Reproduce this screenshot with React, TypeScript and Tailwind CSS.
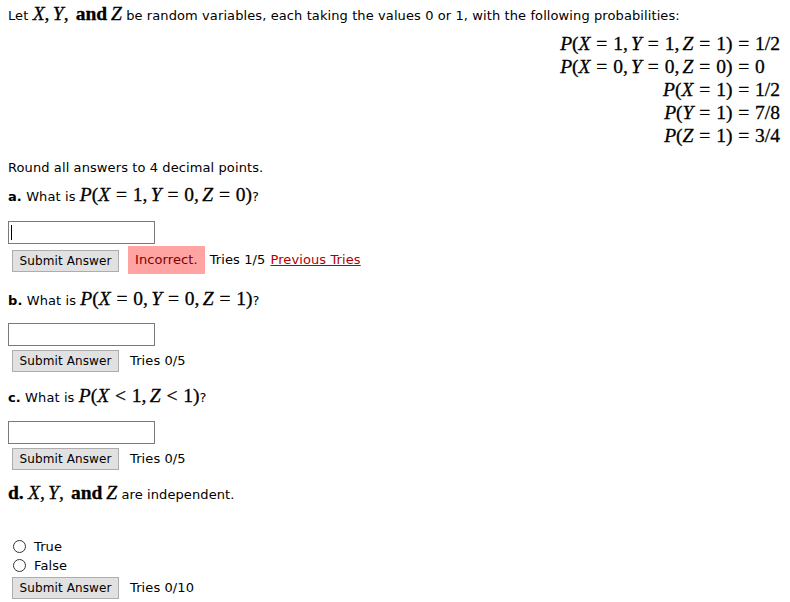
import React from 'react';

const textFont = { fontFamily: '"DejaVu Sans", Verdana, sans-serif' };

const V: React.FC<{ children: React.ReactNode }> = ({ children }) => (
  <span className="italic">{children}</span>
);

const Eq: React.FC<{ children?: React.ReactNode }> = ({ children = '=' }) => (
  <span className="mx-[0.3em]">{children}</span>
);

const Comma: React.FC = () => <span className="mr-[0.17em]">,</span>;

const Math: React.FC<{ children: React.ReactNode; className?: string }> = ({ children, className = 'leading-none' }) => (
  <span
    className={`text-[19.5px] tracking-normal text-black [-webkit-text-stroke:0.3px_black] ${className}`}
    style={{ fontFamily: '"Liberation Serif", "Times New Roman", serif' }}
  >
    {children}
  </span>
);

const Button: React.FC = () => (
  <button
    className="ml-[4px] h-[22px] w-[107px] border border-[#adadad] bg-[#e1e1e1] text-[12px] text-black"
    style={textFont}
  >
    Submit Answer
  </button>
);

const Input: React.FC<{ focused?: boolean }> = ({ focused }) => (
  <div className="h-[23px] w-[147px] border border-[#7a7a7a] bg-white flex items-center pl-[2px]">
    {focused && <span className="h-[15px] w-px bg-black" />}
  </div>
);

const Radio: React.FC<{ label: string }> = ({ label }) => (
  <div className="flex items-center h-[19px] pl-[5px]">
    <span className="h-[13px] w-[13px] rounded-full border border-[#333] bg-white" />
    <span className="ml-[8px]">{label}</span>
  </div>
);

const XYZ: React.FC = () => (
  <Math>
    <V>X</V>
    <Comma />
    <V>Y</V>
    <Comma />
    <span className="font-bold mx-[0.2em]">and</span>
    <V>Z</V>
  </Math>
);

export default function App() {
  return (
    <div className="bg-white min-h-[602px] w-[790px] pl-[8px] text-[13px] tracking-[0.1px] text-black" style={textFont}>
      <div className="pt-[4px] h-[24px] leading-[20px] whitespace-nowrap">
        Let <XYZ /> be random variables, each taking the values 0 or 1, with the following probabilities:
      </div>

      <div className="mt-[8px] flex justify-end pr-[10px]">
        <div className="flex flex-col">
          <Math className="h-[23px] leading-[23px] text-left whitespace-nowrap">
            <V>P</V>(<V>X</V><Eq />1<Comma /><V>Y</V><Eq />1<Comma /><V>Z</V><Eq />1)<Eq />1/2
          </Math>
          <Math className="h-[23px] leading-[23px] text-left whitespace-nowrap">
            <V>P</V>(<V>X</V><Eq />0<Comma /><V>Y</V><Eq />0<Comma /><V>Z</V><Eq />0)<Eq />0
          </Math>
          <Math className="h-[23px] leading-[23px] text-right whitespace-nowrap">
            <V>P</V>(<V>X</V><Eq />1)<Eq />1/2
          </Math>
          <Math className="h-[23px] leading-[23px] text-right whitespace-nowrap">
            <V>P</V>(<V>Y</V><Eq />1)<Eq />7/8
          </Math>
          <Math className="h-[23px] leading-[23px] text-right whitespace-nowrap">
            <V>P</V>(<V>Z</V><Eq />1)<Eq />3/4
          </Math>
        </div>
      </div>

      <div className="mt-[11px] h-[20px] leading-[20px]">Round all answers to 4 decimal points.</div>

      {/* a */}
      <div className="mt-[7px] h-[24px] leading-[24px]">
        <b>a.</b> What is{' '}
        <Math>
          <V>P</V>(<V>X</V><Eq />1<Comma /><V>Y</V><Eq />0<Comma /><V>Z</V><Eq />0)
        </Math>
        ?
      </div>
      <div className="mt-[12px]">
        <Input focused />
      </div>
      <div className="mt-[2px] flex items-center h-[28px]">
        <div className="pt-[2px]">
          <Button />
        </div>
        <span className="ml-[9px] h-[28px] px-[7px] flex items-center bg-[#ffa3a3] text-[#7a0000]">Incorrect.</span>
        <span className="ml-[5px]">Tries 1/5</span>
        <a href="#" className="ml-[5px] text-[#b00000] underline">Previous Tries</a>
      </div>

      {/* b */}
      <div className="mt-[15px] h-[24px] leading-[24px]">
        <b>b.</b> What is{' '}
        <Math>
          <V>P</V>(<V>X</V><Eq />0<Comma /><V>Y</V><Eq />0<Comma /><V>Z</V><Eq />1)
        </Math>
        ?
      </div>
      <div className="mt-[10px]">
        <Input />
      </div>
      <div className="mt-[2px] flex items-center h-[26px]">
        <Button />
        <span className="ml-[11px]">Tries 0/5</span>
      </div>

      {/* c */}
      <div className="mt-[12px] h-[24px] leading-[24px]">
        <b>c.</b> What is{' '}
        <Math>
          <V>P</V>(<V>X</V><Eq>&lt;</Eq>1<Comma /><V>Z</V><Eq>&lt;</Eq>1)
        </Math>
        ?
      </div>
      <div className="mt-[11px]">
        <Input />
      </div>
      <div className="mt-[2px] flex items-center h-[26px]">
        <Button />
        <span className="ml-[11px]">Tries 0/5</span>
      </div>

      {/* d */}
      <div className="mt-[11px] h-[24px] leading-[24px]">
        <Math className="leading-none font-bold">d.</Math> <XYZ /> are independent.
      </div>
      <div className="mt-[30px]">
        <Radio label="True" />
        <Radio label="False" />
      </div>
      <div className="mt-[1px] flex items-center h-[24px]">
        <Button />
        <span className="ml-[11px]">Tries 0/10</span>
      </div>
    </div>
  );
}
